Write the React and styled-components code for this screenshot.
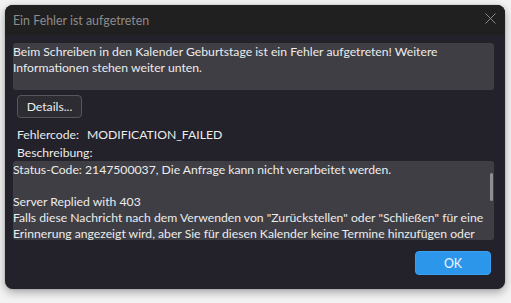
import React from "react";
import styled, { createGlobalStyle } from "styled-components";

const Global = createGlobalStyle`
  html, body { margin: 0; padding: 0; background: #f3f3f3; }
  body { font-family: "Lato", "Noto Sans", sans-serif; }
`;

const Page = styled.div`
  padding: 5px 6px 14px 5px;
`;

const Window = styled.div`
  width: 500px;
  height: 284px;
  background: #23222a;
  border-radius: 8px;
  box-shadow: 0 3px 10px rgba(0, 0, 0, 0.35), 0 0 1px rgba(0, 0, 0, 0.5);
  overflow: hidden;
  display: flex;
  flex-direction: column;
  color: #ececec;
  font-size: 12.2px;
`;

const TitleBar = styled.div`
  height: 30px;
  flex: none;
  background: #202020;
  display: flex;
  align-items: center;
  justify-content: space-between;
  padding: 0 9px 0 8px;
`;

const Title = styled.div`
  color: #8c8c8c;
  font-size: 12.4px;
`;

const CloseBtn = styled.div`
  width: 12px;
  height: 12px;
  display: flex;
  align-items: center;
  justify-content: center;
  margin-top: -3px;
`;

const Body = styled.div`
  flex: 1;
  display: flex;
  flex-direction: column;
  padding: 8px 11px 0 8px;
`;

const Box = styled.div`
  background: #3e3e44;
  border-radius: 3px;
  height: ${(p) => p.$h}px;
  overflow: hidden;
  position: relative;
  flex: none;
  line-height: 16px;
  padding-top: ${(p) => p.$pt || 0}px;
  box-sizing: border-box;
`;

const Line = styled.div`
  white-space: nowrap;
  height: 16px;
`;

const DetailsButton = styled.button`
  margin: 5px 0 7px 4px;
  align-self: flex-start;
  width: 65px;
  height: 23px;
  background: #2d2c33;
  border: 1px solid #57565c;
  border-radius: 4px;
  color: #ececec;
  font-family: inherit;
  font-size: 12.2px;
  padding: 0;
`;

const InfoRow = styled.div`
  display: flex;
  height: 18px;
  align-items: center;
  padding-left: 4px;
  white-space: nowrap;
`;

const Label = styled.span`
  width: 70px;
  flex: none;
`;

const Scrollbar = styled.div`
  position: absolute;
  right: 1px;
  top: 12px;
  width: 3px;
  height: 28px;
  border-radius: 2px;
  background: #8e8e92;
`;

const Footer = styled.div`
  display: flex;
  justify-content: flex-end;
  padding: 11px 3px 0 0;
`;

const OkButton = styled.button`
  width: 76px;
  height: 24px;
  background: #2b96ea;
  border: 1px solid #3aa0ef;
  border-radius: 4px;
  color: #f4f8ff;
  font-family: inherit;
  font-size: 12.4px;
  padding: 0;
`;

export default function App() {
  return (
    <>
      <Global />
      <Page>
        <Window>
          <TitleBar>
            <Title>Ein Fehler ist aufgetreten</Title>
            <CloseBtn>
              <svg width="11" height="11" viewBox="0 0 11 11">
                <path d="M0.5 0.5 L10.5 10.5 M10.5 0.5 L0.5 10.5" stroke="#8a8a8a" strokeWidth="1" fill="none" />
              </svg>
            </CloseBtn>
          </TitleBar>
          <Body>
            <Box $h={47} $pt={1}>
              <Line>Beim Schreiben in den Kalender Geburtstage ist ein Fehler aufgetreten! Weitere</Line>
              <Line>Informationen stehen weiter unten.</Line>
            </Box>
            <DetailsButton>Details...</DetailsButton>
            <InfoRow>
              <Label>Fehlercode:</Label>
              <span>MODIFICATION_FAILED</span>
            </InfoRow>
            <InfoRow>Beschreibung:</InfoRow>
            <Box $h={79} $pt={1}>
              <Line>Status-Code: 2147500037, Die Anfrage kann nicht verarbeitet werden.</Line>
              <Line />
              <Line>Server Replied with 403</Line>
              <Line>Falls diese Nachricht nach dem Verwenden von "Zurückstellen" oder "Schließen" für eine</Line>
              <Line>Erinnerung angezeigt wird, aber Sie für diesen Kalender keine Termine hinzufügen oder</Line>
              <Scrollbar />
            </Box>
            <Footer>
              <OkButton>OK</OkButton>
            </Footer>
          </Body>
        </Window>
      </Page>
    </>
  );
}
